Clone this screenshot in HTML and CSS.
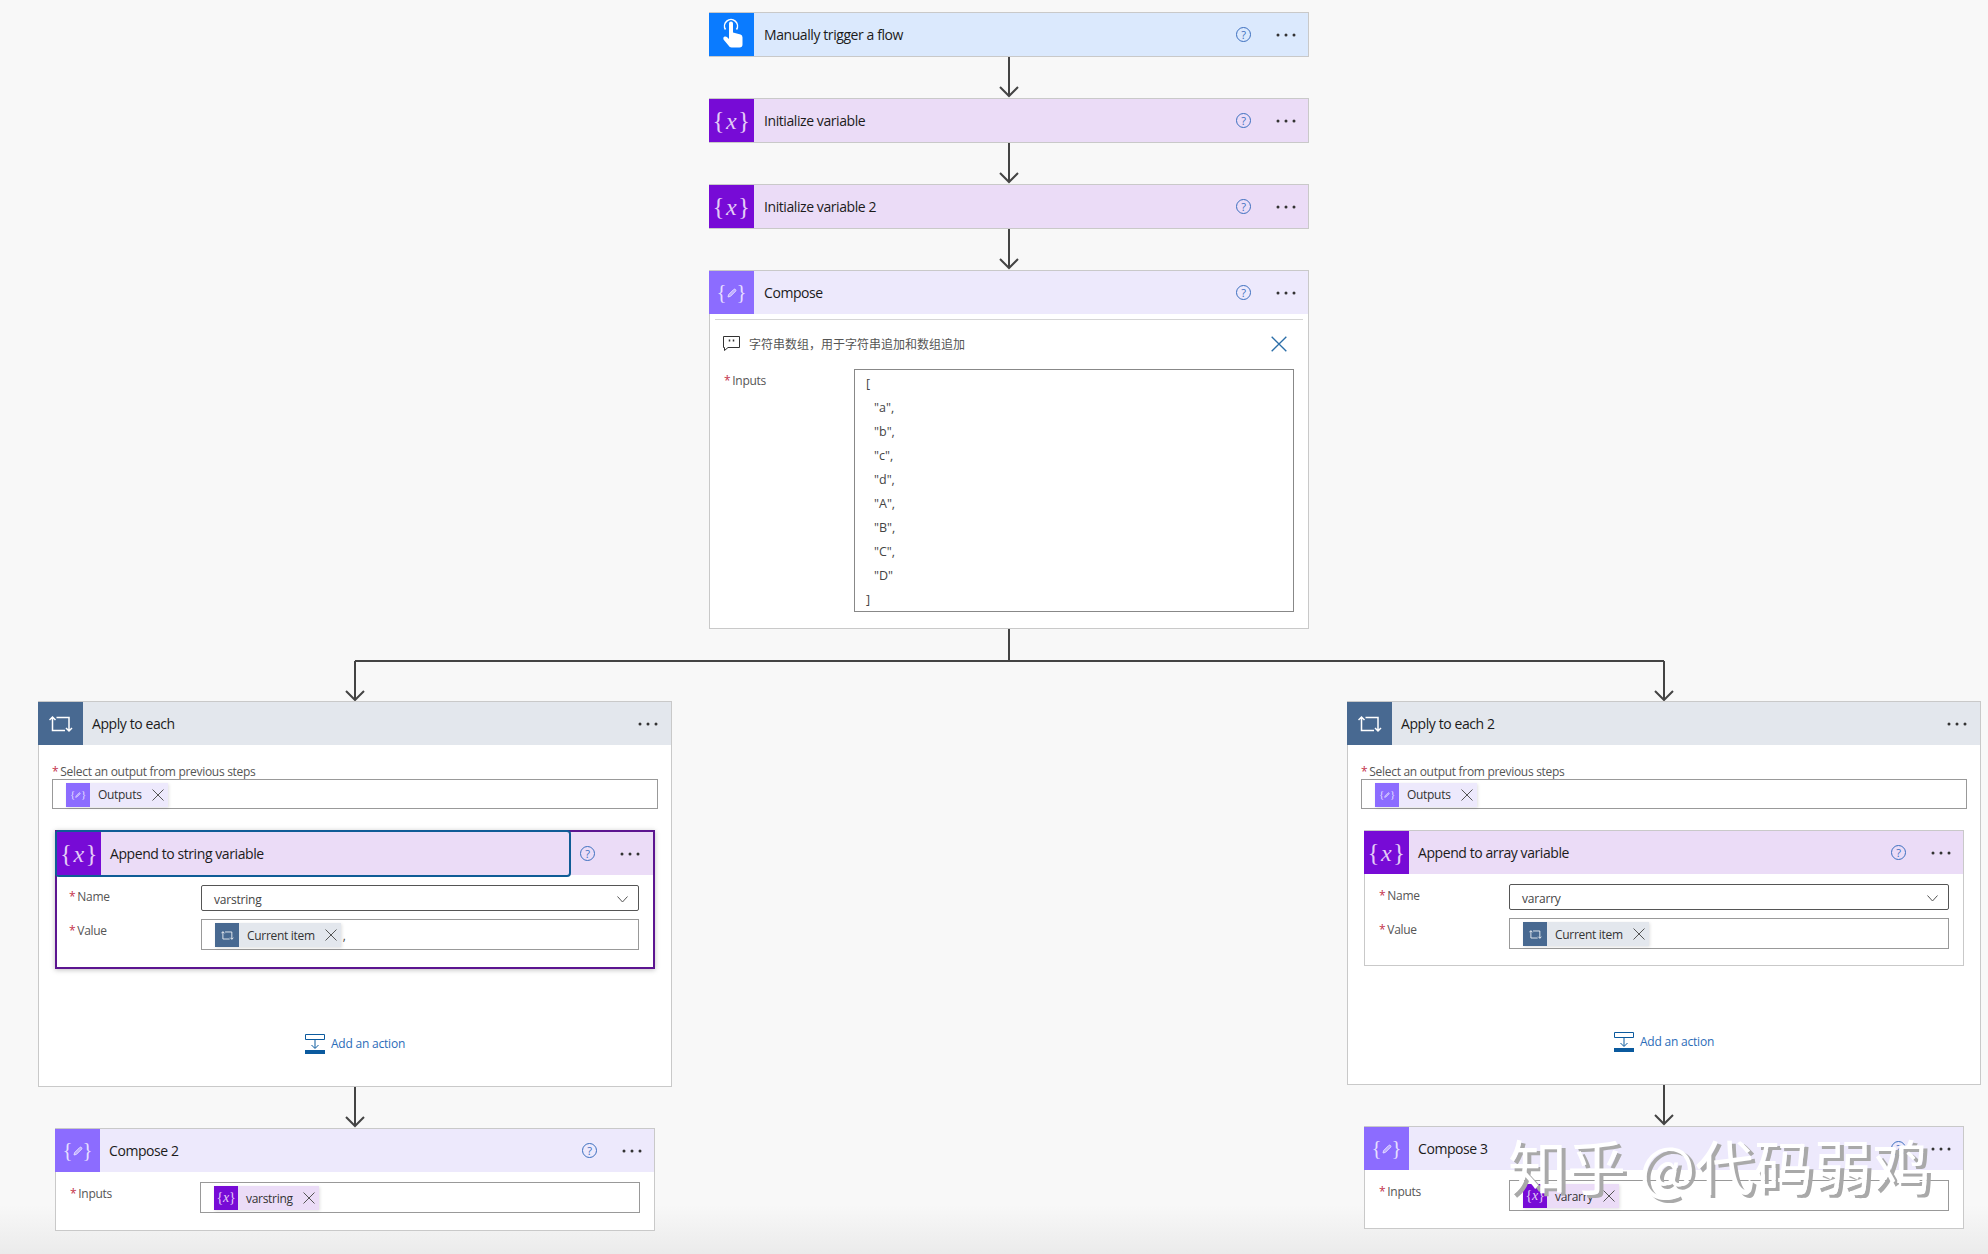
FILE: index.html
```html
<!DOCTYPE html>
<html lang="en">
<head>
<meta charset="utf-8">
<title>Flow</title>
<link rel="stylesheet" href="styles.css">
</head>
<body>
<svg class="defs" width="0" height="0" aria-hidden="true">
  <symbol id="arrow" viewBox="0 0 20 41"><path d="M10 0V39M1 30L10 39L19 30" fill="none" stroke="#444" stroke-width="2"/></symbol>
  <symbol id="dots" viewBox="0 0 20 4"><circle cx="2" cy="2" r="1.5"/><circle cx="10" cy="2" r="1.5"/><circle cx="18" cy="2" r="1.5"/></symbol>
  <symbol id="x" viewBox="0 0 12 12"><path d="M.5 .5L11.5 11.5M11.5 .5L.5 11.5" fill="none" stroke="currentColor" stroke-width="1"/></symbol>
  <symbol id="pencil" viewBox="0 0 10 10"><path d="M1 9L1.6 6.6L6.8 1.4Q7.6 .8 8.4 1.4L8.7 1.7Q9.2 2.4 8.6 3.2L3.4 8.4Z" fill="currentColor" fill-opacity=".55" stroke="currentColor" stroke-width=".9"/></symbol>
  <symbol id="loop" viewBox="0 0 24 18"><path d="M3.5 2V15.5H16M.5 5L3.5 2L6.5 5M7.5 2.5H20V16M17 13L20 16L23 13" fill="none" stroke="currentColor" stroke-width="1.5"/></symbol>
  <symbol id="add" viewBox="0 0 20 20"><path d="M.5 .5H19.5V5.5H.5Z" fill="none" stroke="#0b5a9e"/><path d="M10 6V14M6.5 11L10 14.5L13.500 11" fill="none" stroke="#0b5a9e"/><path d="M0 16H20V20H0Z" fill="#0b5a9e"/></symbol>
</svg>

<main class="page">
  <section class="flow">

    <article class="card">
      <header class="head head-trigger">
        <div class="head-main">
          <span class="ico ico-trigger">
            <svg class="hand" viewBox="0 0 45 45"><path d="M16.500 17.500a6.500 6.500 0 1 1 11 0" fill="none" stroke="#fff" stroke-width="1.500"/><path d="M20 11.500a2 2 0 0 1 4 0v9l7.500 2q2 .5 2 3v7q0 3-3 3h-8q-2 0-3-2l-5-6q-1-2 1-3q1.500-.5 3 1l1.500 1.500z" fill="#fff"/></svg>
          </span>
          <h2 class="title">Manually trigger a flow</h2>
        </div>
        <span class="help">?</span>
        <svg class="dots"><use href="#dots"/></svg>
      </header>
    </article>
    <svg class="arrow"><use href="#arrow"/></svg>

    <article class="card">
      <header class="head head-var">
        <div class="head-main">
          <span class="ico ico-var">{<i>x</i>}</span>
          <h2 class="title">Initialize variable</h2>
        </div>
        <span class="help">?</span>
        <svg class="dots"><use href="#dots"/></svg>
      </header>
    </article>
    <svg class="arrow"><use href="#arrow"/></svg>

    <article class="card">
      <header class="head head-var">
        <div class="head-main">
          <span class="ico ico-var">{<i>x</i>}</span>
          <h2 class="title">Initialize variable 2</h2>
        </div>
        <span class="help">?</span>
        <svg class="dots"><use href="#dots"/></svg>
      </header>
    </article>
    <svg class="arrow"><use href="#arrow"/></svg>

    <article class="card">
      <header class="head head-compose">
        <div class="head-main">
          <span class="ico ico-compose">{<svg class="pen"><use href="#pencil"/></svg>}</span>
          <h2 class="title">Compose</h2>
        </div>
        <span class="help">?</span>
        <svg class="dots"><use href="#dots"/></svg>
      </header>
      <div class="divider"></div>
      <div class="comment">
        <svg class="comment-ico" viewBox="0 0 17 15"><path d="M.5 .5H16.500V11.500H5L1.500 14.500V11.500H.5Z" fill="none" stroke="#333"/><path d="M6.500 3.500V5.500M10.500 3.500V5.500" stroke="#333" stroke-width="1.500"/></svg>
        <span class="comment-text">字符串数组，用于字符串追加和数组追加</span>
        <svg class="comment-close"><use href="#x"/></svg>
      </div>
      <div class="fields fields-top">
        <label class="label"><b>*</b>Inputs</label>
        <div class="code">
          <div>[</div>
          <div class="indent">"a",</div>
          <div class="indent">"b",</div>
          <div class="indent">"c",</div>
          <div class="indent">"d",</div>
          <div class="indent">"A",</div>
          <div class="indent">"B",</div>
          <div class="indent">"C",</div>
          <div class="indent">"D"</div>
          <div>]</div>
        </div>
      </div>
    </article>

    <svg class="branch" viewBox="0 0 1942 72"><path d="M971 0V32M317 32H1626M317 32V71M1626 32V71M308 62L317 71L326 62M1617 62L1626 71L1635 62" fill="none" stroke="#444" stroke-width="2"/></svg>

    <div class="branches">
      <div class="col">
        <article class="card card-loop">
          <header class="head head-loop">
            <div class="head-main">
              <span class="ico ico-loop"><svg class="loop"><use href="#loop"/></svg></span>
              <h2 class="title">Apply to each</h2>
            </div>
            <svg class="dots"><use href="#dots"/></svg>
          </header>
          <div class="loop-body">
            <label class="label label-block"><b>*</b>Select an output from previous steps</label>
            <div class="input input-out">
              <span class="chip chip-compose"><span class="chip-ico ci-compose">{<svg class="pen"><use href="#pencil"/></svg>}</span>Outputs<svg class="chip-x"><use href="#x"/></svg></span>
            </div>
            <article class="card card-inner card-selected">
              <header class="head head-var">
                <div class="head-main">
                  <span class="ico ico-var">{<i>x</i>}</span>
                  <h2 class="title">Append to string variable</h2>
                </div>
                <span class="help">?</span>
                <svg class="dots"><use href="#dots"/></svg>
              </header>
              <div class="fields">
                <label class="label"><b>*</b>Name</label>
                <div class="select">varstring<svg class="chev" viewBox="0 0 11 7"><path d="M.5 .5L5.500 6L10.500 .5" fill="none" stroke="#555"/></svg></div>
                <label class="label"><b>*</b>Value</label>
                <div class="input">
                  <span class="chip chip-loop"><span class="chip-ico ci-loop"><svg class="loop-s"><use href="#loop"/></svg></span>Current item<svg class="chip-x"><use href="#x"/></svg></span><span class="comma">,</span>
                </div>
              </div>
            </article>
            <a class="add">
              <svg class="add-ico"><use href="#add"/></svg>Add an action
            </a>
          </div>
        </article>
        <svg class="arrow"><use href="#arrow"/></svg>
        <article class="card">
          <header class="head head-compose">
            <div class="head-main">
              <span class="ico ico-compose">{<svg class="pen"><use href="#pencil"/></svg>}</span>
              <h2 class="title">Compose 2</h2>
            </div>
            <span class="help">?</span>
            <svg class="dots"><use href="#dots"/></svg>
          </header>
          <div class="fields">
            <label class="label"><b>*</b>Inputs</label>
            <div class="input">
              <span class="chip chip-var"><span class="chip-ico ci-var">{<i>x</i>}</span>varstring<svg class="chip-x"><use href="#x"/></svg></span>
            </div>
          </div>
        </article>
      </div>

      <div class="col col-right">
        <article class="card card-loop">
          <header class="head head-loop">
            <div class="head-main">
              <span class="ico ico-loop"><svg class="loop"><use href="#loop"/></svg></span>
              <h2 class="title">Apply to each 2</h2>
            </div>
            <svg class="dots"><use href="#dots"/></svg>
          </header>
          <div class="loop-body">
            <label class="label label-block"><b>*</b>Select an output from previous steps</label>
            <div class="input input-out">
              <span class="chip chip-compose"><span class="chip-ico ci-compose">{<svg class="pen"><use href="#pencil"/></svg>}</span>Outputs<svg class="chip-x"><use href="#x"/></svg></span>
            </div>
            <article class="card card-inner">
              <header class="head head-var">
                <div class="head-main">
                  <span class="ico ico-var">{<i>x</i>}</span>
                  <h2 class="title">Append to array variable</h2>
                </div>
                <span class="help">?</span>
                <svg class="dots"><use href="#dots"/></svg>
              </header>
              <div class="fields fields-tight">
                <label class="label"><b>*</b>Name</label>
                <div class="select">vararry<svg class="chev" viewBox="0 0 11 7"><path d="M.5 .5L5.500 6L10.500 .5" fill="none" stroke="#555"/></svg></div>
                <label class="label"><b>*</b>Value</label>
                <div class="input">
                  <span class="chip chip-loop"><span class="chip-ico ci-loop"><svg class="loop-s"><use href="#loop"/></svg></span>Current item<svg class="chip-x"><use href="#x"/></svg></span>
                </div>
              </div>
            </article>
            <a class="add add-right">
              <svg class="add-ico"><use href="#add"/></svg>Add an action
            </a>
          </div>
        </article>
        <svg class="arrow"><use href="#arrow"/></svg>
        <article class="card">
          <header class="head head-compose">
            <div class="head-main">
              <span class="ico ico-compose">{<svg class="pen"><use href="#pencil"/></svg>}</span>
              <h2 class="title">Compose 3</h2>
            </div>
            <span class="help">?</span>
            <svg class="dots"><use href="#dots"/></svg>
          </header>
          <div class="fields">
            <label class="label"><b>*</b>Inputs</label>
            <div class="input">
              <span class="chip chip-var"><span class="chip-ico ci-var">{<i>x</i>}</span>vararry<svg class="chip-x"><use href="#x"/></svg></span>
            </div>
          </div>
        </article>
      </div>
    </div>
  </section>
  <div class="watermark">知乎 @代码弱鸡</div>
</main>
</body>
</html>
```

FILE: styles.css
```css
* { box-sizing: border-box; }
html, body { margin: 0; padding: 0; }
body {
  font-family: "Open Sans", "Noto Sans CJK SC", sans-serif;
  color: #222;
}
.defs { position: absolute; }
.page {
  position: relative;
  height: 1254px;
  overflow: hidden;
  padding: 12px 8px 0 38px;
  background: linear-gradient(#f8f8f8 1205px, #ebebeb 1254px);
}
.flow { display: flex; flex-direction: column; align-items: center; }

.card {
  width: 600px;
  border: 1px solid #c9c9c9;
  background: #fff;
}
.card-loop { width: 100%; }
.card-inner { width: 600px; margin: 21px 3px 0; }
.card-selected {
  border: 2px solid #5c1590;
  box-shadow: 0 1px 5px rgba(0, 0, 0, .25);
}

.head { display: flex; align-items: center; height: 43px; padding-right: 12px; }
.head-loop, .card-selected .head { padding-right: 13px; }
.head-trigger { background: #dbe9fd; }
.head-var { background: #ebdcf7; }
.head-compose { background: #ede9fc; }
.head-loop { background: #e3e7ed; }
.head-main { display: flex; align-items: center; flex: 1; height: 100%; min-width: 0; }
.card-selected .head-main { margin-right: 11px; border-radius: 2px; box-shadow: 0 0 0 2px #0f5c96; }

.ico {
  flex: none;
  display: flex;
  align-items: center;
  justify-content: center;
  width: 45px;
  height: 100%;
  margin-left: -1px;
  font-family: "Liberation Serif", serif;
  line-height: 1;
}
.card-selected .ico { margin-left: 0; width: 44px; }
.ico-trigger { background: #0a7bff; }
.ico-var { background: #770bd6; color: #e4cdf6; font-size: 25px; letter-spacing: .5px; }
.ico-var i { padding: 0 1px; font-size: 24px; font-weight: 400; }
.ico-compose { background: #8c6cff; color: #e6dfff; font-size: 21px; }
.ico-loop { background: #486991; color: #fff; }
.hand { width: 45px; height: 45px; flex: none; }
.loop { width: 24px; height: 18px; }
.pen { width: 10px; height: 10px; margin: 0; }

.title {
  margin: 0 0 0 10px;
  font-size: 14px;
  font-weight: 400;
  letter-spacing: -.42px;
  color: #1b1b1b;
}
.col .title { margin-left: 9px; }
.help {
  flex: none;
  width: 15px;
  height: 15px;
  border: 1px solid #3c6fbf;
  border-radius: 50%;
  color: #3c6fbf;
  font-size: 11px;
  line-height: 13px;
  text-align: center;
}
.dots { flex: none; width: 20px; height: 4px; margin-left: 25px; fill: #333; }

.arrow { display: block; flex: none; width: 20px; height: 41px; }
.branch { display: block; flex: none; width: 1942px; height: 72px; }
.branches { display: flex; justify-content: space-between; width: 100%; }
.col { display: flex; flex-direction: column; align-items: center; width: 634px; }
.col-right { margin-right: -1px; }

.divider { height: 1px; margin: 5px 5px 0; background: #d5d5d5; }
.comment { display: flex; align-items: center; height: 49px; padding: 0 21px 2px 13px; }
.comment-ico { flex: none; width: 17px; height: 15px; }
.comment-text { flex: 1; margin-left: 9px; font-size: 12px; color: #555; }
.comment-close { flex: none; width: 16px; height: 16px; color: #2b6ea8; }

.fields {
  display: grid;
  grid-template-columns: 130px 1fr;
  row-gap: 8px;
  padding: 10px 14px 17px;
}
.fields-top { padding-top: 0; padding-bottom: 16px; }
.fields-tight { padding-bottom: 16px; }
.card-selected .fields { grid-template-columns: 132px 1fr; padding-left: 12px; }

.label { padding-top: 4px; font-size: 12px; line-height: 16px; color: #555; letter-spacing: -.3px; }
.label b { margin-right: 2px; font-weight: 400; color: #c4314b; }
.label-block { display: block; padding: 0; line-height: 14px; }

.input {
  display: flex;
  align-items: center;
  height: 31px;
  padding: 1px 13px 0;
  border: 1px solid #999;
  background: #fff;
  font-size: 12px;
}
.input-out { height: 30px; }
.select {
  display: flex;
  align-items: center;
  justify-content: space-between;
  height: 26px;
  padding: 2px 10px 0 12px;
  border: 1px solid #555;
  border-radius: 2px;
  font-size: 12px;
  letter-spacing: -.2px;
  color: #444;
}
.chev { width: 11px; height: 7px; }
.code {
  height: 243px;
  padding: 2px 11px 0;
  border: 1px solid #888;
  font-size: 12.500px;
  line-height: 24px;
  color: #444;
}
.indent { padding-left: 8px; }

.chip {
  display: flex;
  align-items: center;
  height: 24px;
  padding-right: 4px;
  font-size: 12px;
  letter-spacing: -.3px;
  color: #333;
  box-shadow: 1px 1px 3px rgba(0, 0, 0, .12);
}
.chip-compose { background: #ede9fc; }
.chip-loop { background: #e3e7ed; }
.chip-var { background: #ebdcf7; }
.chip-ico {
  flex: none;
  display: flex;
  align-items: center;
  justify-content: center;
  width: 24px;
  height: 24px;
  margin-right: 8px;
  font-family: "Liberation Serif", serif;
  line-height: 1;
}
.ci-compose { background: #8c6cff; color: #e6dfff; font-size: 11px; }
.ci-compose .pen { width: 6px; height: 6px; margin: 0; }
.ci-loop { background: #486991; color: #fff; }
.ci-var { background: #770bd6; color: #e4cdf6; font-size: 14px; }
.loop-s { width: 13px; height: 11px; }
.chip-x { flex: none; width: 12px; height: 12px; margin-left: 10px; color: #555; }
.comma { margin-left: 2px; color: #444; }

.loop-body { padding: 20px 13px 32px; }
.add {
  display: flex;
  align-items: center;
  justify-content: center;
  gap: 6px;
  margin-top: 65px;
  font-size: 12px;
  letter-spacing: -.2px;
  line-height: 16px;
  color: #2b6cb8;
}
.add-right { margin-top: 66px; }
.add-ico { width: 20px; height: 20px; flex: none; }

.watermark {
  position: absolute;
  left: 1508px;
  top: 1122px;
  font-family: "Noto Sans CJK SC", sans-serif;
  font-size: 59px;
  line-height: 86px;
  white-space: nowrap;
  color: #fff;
  text-shadow: 4px 3px 0 #a9a9a9;
}
```
